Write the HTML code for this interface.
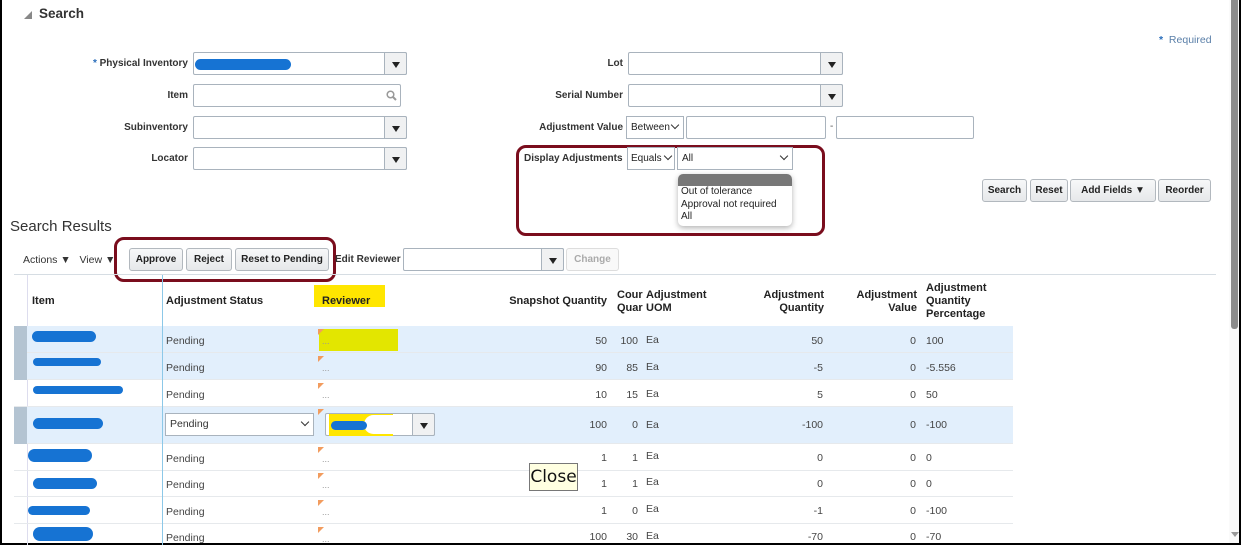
<!DOCTYPE html>
<html><head><meta charset="utf-8">
<style>
*{box-sizing:border-box;margin:0;padding:0}
body{width:1241px;height:545px;overflow:hidden;background:#fff;font-family:"Liberation Sans",Arial,sans-serif;position:relative;color:#333}
.a{position:absolute}
.lbl{position:absolute;font-size:10px;font-weight:bold;color:#333;text-align:right;white-space:nowrap}
.inp{position:absolute;height:23px;border:1px solid #a9b3bd;background:#fff;border-radius:2px}
.dd{position:absolute;top:-1px;right:-1px;width:23px;height:23px;border:1px solid #a9b3bd;background:#f0f1f2;border-radius:0 2px 2px 0}
.dd:after{content:"";position:absolute;left:7px;top:9px;border-left:4px solid transparent;border-right:4px solid transparent;border-top:6px solid #222}
.btn{position:absolute;height:23px;border:1px solid #b2b8be;background:linear-gradient(#f7f8f9,#e6e8ea);border-radius:3px;font-size:10px;font-weight:bold;color:#222;text-align:center;line-height:21px;white-space:nowrap}
.sel{position:absolute;height:23px;border:1px solid #a9b3bd;background:#fff;font-size:10px;line-height:21px;padding-left:4px;color:#222;white-space:nowrap;overflow:hidden}
.chev{position:absolute;right:5px;top:5px;width:6px;height:6px;border-right:1.5px solid #333;border-bottom:1.5px solid #333;transform:rotate(45deg)}
.th{position:absolute;font-size:11px;font-weight:bold;color:#222;line-height:13px}
.td{position:absolute;font-size:10.5px;color:#444;white-space:nowrap}
.r{text-align:right}
.blob{position:absolute;background:#1673d3;border-radius:8px}
.flag{position:absolute;width:0;height:0;border-top:6px solid #f29c5e;border-right:6px solid transparent}
.dots{position:absolute;font-size:9px;color:#999}
.row{position:absolute;left:14px;width:999px;border-bottom:1px solid #e6e9ec}
</style></head><body>
<div class="a" style="left:0;top:0;width:2px;height:545px;background:#000"></div>
<div class="a" style="left:1239px;top:0;width:2px;height:545px;background:#000"></div>
<div class="a" style="left:0;top:543px;width:1241px;height:2px;background:#000"></div>
<div class="a" style="left:1229px;top:0;width:10px;height:543px;background:#fafafa"></div>
<div class="a" style="left:1231px;top:0;width:7px;height:329px;background:#8c8c8c;border-radius:0 0 3px 3px"></div>
<div class="a" style="left:1231px;top:532px;border-left:4px solid transparent;border-right:4px solid transparent;border-top:5px solid #999"></div>

<div class="a" style="left:24px;top:11px;border-left:8px solid transparent;border-bottom:8px solid #888"></div>
<div class="a" style="left:39px;top:6px;font-size:13.5px;font-weight:bold;color:#333">Search</div>
<div class="a" style="left:1159px;top:34px;font-size:10.5px;color:#5a7fa8"><span style="color:#2a6ebb;font-weight:bold">*</span>&nbsp; Required</div>

<div class="lbl" style="right:1053px;top:58px"><span style="color:#2a6ebb">*</span> Physical Inventory</div>
<div class="inp" style="left:193px;top:52px;width:214px"><div class="dd"></div></div>
<div class="blob" style="left:195px;top:59px;width:96px;height:11px;border-radius:6px"></div>
<div class="lbl" style="right:1053px;top:90px">Item</div>
<div class="inp" style="left:193px;top:84px;width:208px"><svg class="a" style="left:192px;top:5px" width="11" height="11" viewBox="0 0 11 11"><circle cx="4.5" cy="4.5" r="3.3" fill="none" stroke="#999" stroke-width="1.5"/><path d="M7 7l3 3" stroke="#999" stroke-width="2"/></svg></div>
<div class="lbl" style="right:1053px;top:122px">Subinventory</div>
<div class="inp" style="left:193px;top:116px;width:214px"><div class="dd"></div></div>
<div class="lbl" style="right:1053px;top:153px">Locator</div>
<div class="inp" style="left:193px;top:147px;width:214px"><div class="dd"></div></div>

<div class="lbl" style="right:618px;top:58px">Lot</div>
<div class="inp" style="left:628px;top:52px;width:215px"><div class="dd"></div></div>
<div class="lbl" style="right:618px;top:90px">Serial Number</div>
<div class="inp" style="left:628px;top:84px;width:215px"><div class="dd"></div></div>
<div class="lbl" style="right:618px;top:122px">Adjustment Value</div>
<div class="sel" style="left:626px;top:116px;width:58px">Between<div class="chev"></div></div>
<div class="inp" style="left:686px;top:116px;width:140px"></div>
<div class="a" style="left:830px;top:121px;font-size:10px;color:#555">-</div>
<div class="inp" style="left:836px;top:116px;width:138px"></div>

<div class="a" style="left:516px;top:145px;width:309px;height:91px;border:3px solid #7a0d1d;border-radius:10px"></div>
<div class="lbl" style="left:524px;top:153px;text-align:left">Display Adjustments</div>
<div class="sel" style="left:627px;top:147px;width:48px;padding-left:3px">Equals<div class="chev" style="right:3px"></div></div>
<div class="sel" style="left:677px;top:147px;width:116px">All<div class="chev"></div></div>
<div class="a" style="left:678px;top:174px;width:114px;height:52px;background:#fff;border-radius:5px;box-shadow:0 2px 6px rgba(0,0,0,.3);overflow:hidden">
<div style="height:12px;background:#777"></div>
<div style="font-size:10px;line-height:12.5px;color:#222;padding-left:3px">Out of tolerance<br>Approval not required<br>All</div></div>

<div class="btn" style="left:982px;top:179px;width:45px">Search</div>
<div class="btn" style="left:1030px;top:179px;width:38px">Reset</div>
<div class="btn" style="left:1070px;top:179px;width:86px">Add Fields &#9660;</div>
<div class="btn" style="left:1158px;top:179px;width:53px">Reorder</div>

<div class="a" style="left:10px;top:218px;font-size:15px;color:#333">Search Results</div>

<div class="a" style="left:23px;top:254px;font-size:10.5px;color:#333">Actions &#9660;&nbsp;&nbsp; View &#9660;</div>
<div class="a" style="left:114px;top:237px;width:222px;height:45px;border:3px solid #7a0d1d;border-radius:10px"></div>
<div class="btn" style="left:129px;top:248px;width:54px">Approve</div>
<div class="btn" style="left:186px;top:248px;width:46px">Reject</div>
<div class="btn" style="left:235px;top:248px;width:94px">Reset to Pending</div>
<div class="lbl" style="left:335px;top:254px;text-align:left">Edit Reviewer</div>
<div class="inp" style="left:403px;top:248px;width:161px"><div class="dd"></div></div>
<div class="btn" style="left:566px;top:248px;width:53px;color:#aaa;background:#f9f9f9;border-color:#ddd">Change</div>
<div class="a" style="left:14px;top:274px;width:1202px;height:1px;background:#d6dde3"></div>

<div class="a" style="left:27px;top:275px;width:1px;height:270px;background:#dde"></div>
<div class="th" style="left:32px;top:295px">Item</div>
<div class="th" style="left:166px;top:295px">Adjustment Status</div>
<div class="a" style="left:314px;top:285px;width:71px;height:22px;background:#ffe600"></div>
<div class="th" style="left:322px;top:295px">Reviewer</div>
<div class="th r" style="left:500px;top:295px;width:107px">Snapshot Quantity</div>
<div class="th" style="left:617px;top:289px;width:28px;overflow:hidden;white-space:nowrap">Cour<br>Quar</div>
<div class="th" style="left:646px;top:289px">Adjustment<br>UOM</div>
<div class="th r" style="left:720px;top:289px;width:104px">Adjustment<br>Quantity</div>
<div class="th r" style="left:830px;top:289px;width:87px">Adjustment<br>Value</div>
<div class="th" style="left:926px;top:282px">Adjustment<br>Quantity<br>Percentage</div>

<div class="row" style="top:326px;height:27px;background:#e2effc"></div>
<div class="row" style="top:353px;height:27px;background:#e2effc"></div>
<div class="row" style="top:380px;height:27px"></div>
<div class="row" style="top:407px;height:37px;background:#e2effc"></div>
<div class="row" style="top:444px;height:27px"></div>
<div class="row" style="top:471px;height:26px"></div>
<div class="row" style="top:497px;height:27px"></div>
<div class="a" style="left:14px;top:326px;width:13px;height:54px;background:#b4c4d2"></div>
<div class="a" style="left:14px;top:407px;width:13px;height:37px;background:#b4c4d2"></div>
<div class="a" style="left:162px;top:275px;width:1px;height:270px;background:#8cc8e8"></div>

<div class="blob" style="left:32px;top:331px;width:64px;height:11px"></div>
<div class="blob" style="left:33px;top:358px;width:68px;height:8px"></div>
<div class="blob" style="left:33px;top:386px;width:90px;height:8px"></div>
<div class="blob" style="left:33px;top:418px;width:70px;height:11px"></div>
<div class="blob" style="left:28px;top:449px;width:64px;height:13px"></div>
<div class="blob" style="left:33px;top:478px;width:64px;height:11px"></div>
<div class="blob" style="left:28px;top:506px;width:62px;height:9px"></div>
<div class="blob" style="left:33px;top:527px;width:60px;height:14px"></div>

<div class="td" style="left:166px;top:335px">Pending</div>
<div class="td" style="left:166px;top:362px">Pending</div>
<div class="td" style="left:166px;top:389px">Pending</div>
<div class="sel" style="left:165px;top:413px;width:149px;color:#333;font-size:10.5px">Pending<div class="chev"></div></div>
<div class="td" style="left:166px;top:453px">Pending</div>
<div class="td" style="left:166px;top:479px">Pending</div>
<div class="td" style="left:166px;top:506px">Pending</div>
<div class="td" style="left:166px;top:532px">Pending</div>

<div class="a" style="left:319px;top:329px;width:79px;height:22px;background:#e3e600"></div>
<div class="flag" style="left:318px;top:329px"></div><div class="dots" style="left:322px;top:336px">...</div>
<div class="flag" style="left:318px;top:356px"></div><div class="dots" style="left:322px;top:363px">...</div>
<div class="flag" style="left:318px;top:383px"></div><div class="dots" style="left:322px;top:390px">...</div>
<div class="flag" style="left:318px;top:409px"></div>
<div class="inp" style="left:325px;top:413px;width:110px"><div class="dd"></div></div>
<div class="a" style="left:329px;top:414px;width:64px;height:22px;background:#ffe600"></div>
<div class="a" style="left:364px;top:415px;width:40px;height:19px;background:#fff;border-radius:10px"></div>
<div class="blob" style="left:331px;top:421px;width:36px;height:9px"></div>
<div class="flag" style="left:318px;top:447px"></div><div class="dots" style="left:322px;top:454px">...</div>
<div class="flag" style="left:318px;top:473px"></div><div class="dots" style="left:322px;top:480px">...</div>
<div class="flag" style="left:318px;top:500px"></div><div class="dots" style="left:322px;top:507px">...</div>
<div class="flag" style="left:318px;top:527px"></div><div class="dots" style="left:322px;top:534px">...</div>

<div class="a" style="left:529px;top:463px;width:49px;height:28px;background:#ffffe1;border:1px solid #777;font-size:17px;line-height:26px;text-align:center;color:#111;font-family:'DejaVu Sans',sans-serif">Close</div>

<div class="td r" style="left:560px;top:335px;width:47px">50</div><div class="td r" style="left:610px;top:335px;width:28px">100</div><div class="td" style="left:646px;top:334px">Ea</div><div class="td r" style="left:760px;top:335px;width:63px">50</div><div class="td r" style="left:880px;top:335px;width:36px">0</div><div class="td" style="left:926px;top:335px">100</div>
<div class="td r" style="left:560px;top:362px;width:47px">90</div><div class="td r" style="left:610px;top:362px;width:28px">85</div><div class="td" style="left:646px;top:361px">Ea</div><div class="td r" style="left:760px;top:362px;width:63px">-5</div><div class="td r" style="left:880px;top:362px;width:36px">0</div><div class="td" style="left:926px;top:362px">-5.556</div>
<div class="td r" style="left:560px;top:389px;width:47px">10</div><div class="td r" style="left:610px;top:389px;width:28px">15</div><div class="td" style="left:646px;top:388px">Ea</div><div class="td r" style="left:760px;top:389px;width:63px">5</div><div class="td r" style="left:880px;top:389px;width:36px">0</div><div class="td" style="left:926px;top:389px">50</div>
<div class="td r" style="left:560px;top:419px;width:47px">100</div><div class="td r" style="left:610px;top:419px;width:28px">0</div><div class="td" style="left:646px;top:419px">Ea</div><div class="td r" style="left:760px;top:419px;width:63px">-100</div><div class="td r" style="left:880px;top:419px;width:36px">0</div><div class="td" style="left:926px;top:419px">-100</div>
<div class="td r" style="left:560px;top:452px;width:47px">1</div><div class="td r" style="left:610px;top:452px;width:28px">1</div><div class="td" style="left:646px;top:450px">Ea</div><div class="td r" style="left:760px;top:452px;width:63px">0</div><div class="td r" style="left:880px;top:452px;width:36px">0</div><div class="td" style="left:926px;top:452px">0</div>
<div class="td r" style="left:560px;top:478px;width:47px">1</div><div class="td r" style="left:610px;top:478px;width:28px">1</div><div class="td" style="left:646px;top:476px">Ea</div><div class="td r" style="left:760px;top:478px;width:63px">0</div><div class="td r" style="left:880px;top:478px;width:36px">0</div><div class="td" style="left:926px;top:478px">0</div>
<div class="td r" style="left:560px;top:505px;width:47px">1</div><div class="td r" style="left:610px;top:505px;width:28px">0</div><div class="td" style="left:646px;top:503px">Ea</div><div class="td r" style="left:760px;top:505px;width:63px">-1</div><div class="td r" style="left:880px;top:505px;width:36px">0</div><div class="td" style="left:926px;top:505px">-100</div>
<div class="td r" style="left:560px;top:531px;width:47px">100</div><div class="td r" style="left:610px;top:531px;width:28px">30</div><div class="td" style="left:646px;top:530px">Ea</div><div class="td r" style="left:760px;top:531px;width:63px">-70</div><div class="td r" style="left:880px;top:531px;width:36px">0</div><div class="td" style="left:926px;top:531px">-70</div>
</body></html>
